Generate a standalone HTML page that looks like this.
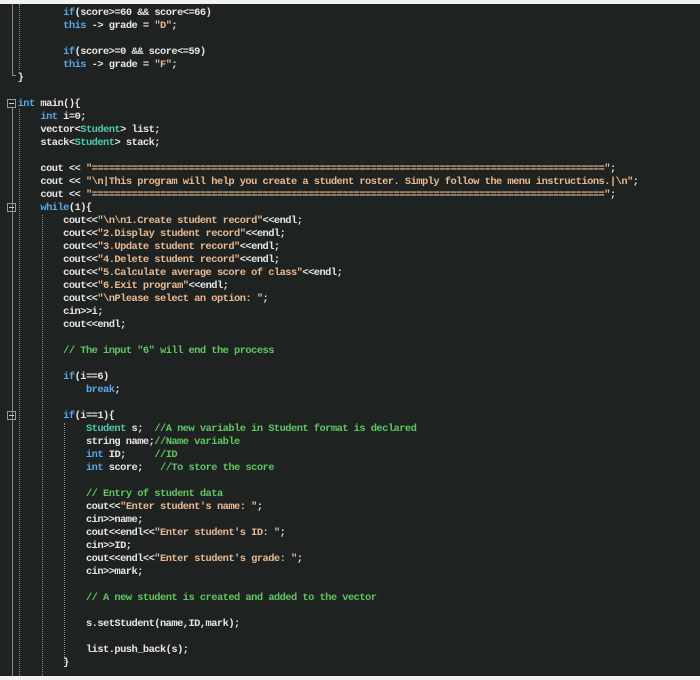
<!DOCTYPE html>
<html><head><style>
html,body{margin:0;padding:0;}
body{width:700px;height:680px;background:#f2f2f2;position:relative;overflow:hidden;}
#ed{position:absolute;left:0;top:4px;width:700px;height:672px;background:#1e2322;}
pre{position:absolute;left:17.6px;top:2.5px;margin:0;font-family:"Liberation Mono",monospace;font-weight:bold;font-size:10.4px;letter-spacing:-0.54px;line-height:13px;color:#e6e6e6;}
.k{color:#5aa6e6}.t{color:#4ec9b0}.s{color:#e8b890}.c{color:#62c462}
.v{position:absolute;width:1px;background:#8a8a8a;}
.d{position:absolute;width:0;border-left:1px dotted #8a8a8a;}
.f{position:absolute;width:7px;height:7px;border:1px solid #9a9a9a;box-sizing:content-box;}
.f:after{content:"";position:absolute;left:1px;top:3px;width:5px;height:1px;background:#ccc;}
</style></head><body>
<div id="ed">
<div class="v" style="left:12px;top:0;height:72px"></div>
<div class="v" style="left:12px;top:71px;width:4px;height:1px"></div>
<div class="d" style="left:19px;top:0;height:66px"></div>
<div class="f" style="left:7px;top:95px"></div>
<div class="v" style="left:12px;top:104px;height:568px"></div>
<div class="d" style="left:19px;top:105px;height:567px"></div>
<div class="f" style="left:7px;top:199px"></div>
<div class="d" style="left:42px;top:211px;height:461px"></div>
<div class="f" style="left:7px;top:407px"></div>
<div class="d" style="left:64px;top:419px;height:240px"></div>
<pre>        <span class="k">if</span>(score&gt;=60 &amp;&amp; score&lt;=66)
        <span class="k">this</span> -&gt; grade = <span class="s">"D"</span>;

        <span class="k">if</span>(score&gt;=0 &amp;&amp; score&lt;=59)
        <span class="k">this</span> -&gt; grade = <span class="s">"F"</span>;
}

<span class="k">int</span> main(){
    <span class="k">int</span> i=0;
    vector&lt;<span class="t">Student</span>&gt; list;
    stack&lt;<span class="t">Student</span>&gt; stack;

    cout &lt;&lt; <span class="s">"=========================================================================================="</span>;
    cout &lt;&lt; <span class="s">"\n|This program will help you create a student roster. Simply follow the menu instructions.|\n"</span>;
    cout &lt;&lt; <span class="s">"=========================================================================================="</span>;
    <span class="k">while</span>(1){
        cout&lt;&lt;<span class="s">"\n\n1.Create student record"</span>&lt;&lt;endl;
        cout&lt;&lt;<span class="s">"2.Display student record"</span>&lt;&lt;endl;
        cout&lt;&lt;<span class="s">"3.Update student record"</span>&lt;&lt;endl;
        cout&lt;&lt;<span class="s">"4.Delete student record"</span>&lt;&lt;endl;
        cout&lt;&lt;<span class="s">"5.Calculate average score of class"</span>&lt;&lt;endl;
        cout&lt;&lt;<span class="s">"6.Exit program"</span>&lt;&lt;endl;
        cout&lt;&lt;<span class="s">"\nPlease select an option: "</span>;
        cin&gt;&gt;i;
        cout&lt;&lt;endl;

        <span class="c">// The input "6" will end the process</span>

        <span class="k">if</span>(i==6)
            <span class="k">break</span>;

        <span class="k">if</span>(i==1){
            <span class="t">Student</span> s;  <span class="c">//A new variable in Student format is declared</span>
            string name;<span class="c">//Name variable</span>
            <span class="k">int</span> ID;     <span class="c">//ID</span>
            <span class="k">int</span> score;   <span class="c">//To store the score</span>

            <span class="c">// Entry of student data</span>
            cout&lt;&lt;<span class="s">"Enter student's name: "</span>;
            cin&gt;&gt;name;
            cout&lt;&lt;endl&lt;&lt;<span class="s">"Enter student's ID: "</span>;
            cin&gt;&gt;ID;
            cout&lt;&lt;endl&lt;&lt;<span class="s">"Enter student's grade: "</span>;
            cin&gt;&gt;mark;

            <span class="c">// A new student is created and added to the vector</span>

            s.setStudent(name,ID,mark);

            list.push_back(s);
        }
</pre>
</div>
</body></html>
